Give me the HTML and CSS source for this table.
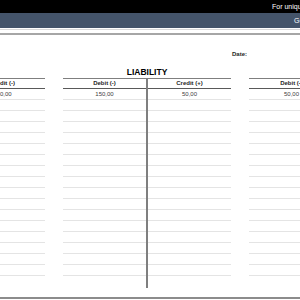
FILE: index.html
```html
<!DOCTYPE html>
<html>
<head>
<meta charset="utf-8">
<link rel="stylesheet" href="styles.css">
</head>
<body>
<div class="topbar">For unique templates visit our website</div>
<div class="navbar">Go to Home</div>
<div class="rule-light"></div>
<div class="rule-dark"></div>
<div class="date-row">Date:</div>
<div class="title-row"><div class="title">LIABILITY</div></div>
<div class="table">
  <div class="col col-a">
    <div class="head">Credit (-)</div>
    <div class="row">150,00</div>
    <div class="row"></div><div class="row"></div><div class="row"></div><div class="row"></div>
    <div class="row"></div><div class="row"></div><div class="row"></div><div class="row"></div>
    <div class="row"></div><div class="row"></div><div class="row"></div><div class="row"></div>
    <div class="row"></div><div class="row"></div><div class="row"></div><div class="row"></div>
  </div>
  <div class="col col-b">
    <div class="head">Debit (-)</div>
    <div class="row">150,00</div>
    <div class="row"></div><div class="row"></div><div class="row"></div><div class="row"></div>
    <div class="row"></div><div class="row"></div><div class="row"></div><div class="row"></div>
    <div class="row"></div><div class="row"></div><div class="row"></div><div class="row"></div>
    <div class="row"></div><div class="row"></div><div class="row"></div><div class="row"></div>
  </div>
  <div class="col col-c">
    <div class="head">Credit (+)</div>
    <div class="row">50,00</div>
    <div class="row"></div><div class="row"></div><div class="row"></div><div class="row"></div>
    <div class="row"></div><div class="row"></div><div class="row"></div><div class="row"></div>
    <div class="row"></div><div class="row"></div><div class="row"></div><div class="row"></div>
    <div class="row"></div><div class="row"></div><div class="row"></div><div class="row"></div>
  </div>
  <div class="col col-d">
    <div class="head">Debit (-)</div>
    <div class="row">50,00</div>
    <div class="row"></div><div class="row"></div><div class="row"></div><div class="row"></div>
    <div class="row"></div><div class="row"></div><div class="row"></div><div class="row"></div>
    <div class="row"></div><div class="row"></div><div class="row"></div><div class="row"></div>
    <div class="row"></div><div class="row"></div><div class="row"></div><div class="row"></div>
  </div>
</div>
<div class="rule-bottom"></div>
</body>
</html>
```

FILE: styles.css
```css
html, body {
  margin: 0;
  padding: 0;
  width: 300px;
  height: 300px;
  overflow: hidden;
  background: #ffffff;
  font-family: "Liberation Sans", Arial, sans-serif;
}
.topbar {
  height: 13px;
  background: #000000;
  color: #ffffff;
  font-size: 7px;
  line-height: 13px;
  padding-left: 272px;
  white-space: nowrap;
  overflow: hidden;
}
.navbar {
  height: 15px;
  background: #44546a;
  color: #ffffff;
  font-size: 7px;
  line-height: 15px;
  padding-left: 294px;
  white-space: nowrap;
  overflow: hidden;
}
.rule-light {
  margin-top: 1px;
  height: 1px;
  background: #d9d9d9;
}
.rule-dark {
  margin-top: 3px;
  height: 2px;
  background: #a6a6a6;
}
.date-row {
  margin-top: 15px;
  padding-left: 232px;
  font-size: 6px;
  font-weight: bold;
  line-height: 8px;
  color: #262626;
}
.title-row {
  margin-top: 9px;
  display: flex;
  padding-left: 63px;
}
.title {
  width: 168px;
  text-align: center;
  font-size: 8.5px;
  font-weight: bold;
  line-height: 11px;
  color: #000000;
}
.table {
  display: flex;
  margin-left: -40px;
  width: 400px;
  height: 210px;
}
.col {
  display: flex;
  flex-direction: column;
  width: 85px;
  flex: none;
}
.col-a { margin-right: 18px; }
.col-b {
  width: 83px;
  border-right: 2px solid #7f7f7f;
  padding-bottom: 12px;
}
.col-c { width: 83px; margin-right: 18px; }
.head {
  height: 9px;
  border-top: 1px solid #7f7f7f;
  border-bottom: 1px solid #595959;
  font-size: 6px;
  font-weight: bold;
  line-height: 9px;
  text-align: center;
  color: #262626;
  white-space: nowrap;
}
.row {
  height: 10px;
  border-bottom: 1px solid #e4e4e4;
  font-size: 6px;
  line-height: 11px;
  text-align: center;
  color: #404040;
  white-space: nowrap;
}
.rule-bottom {
  margin-top: 9px;
  height: 2px;
  background: #8c8c8c;
}
```
